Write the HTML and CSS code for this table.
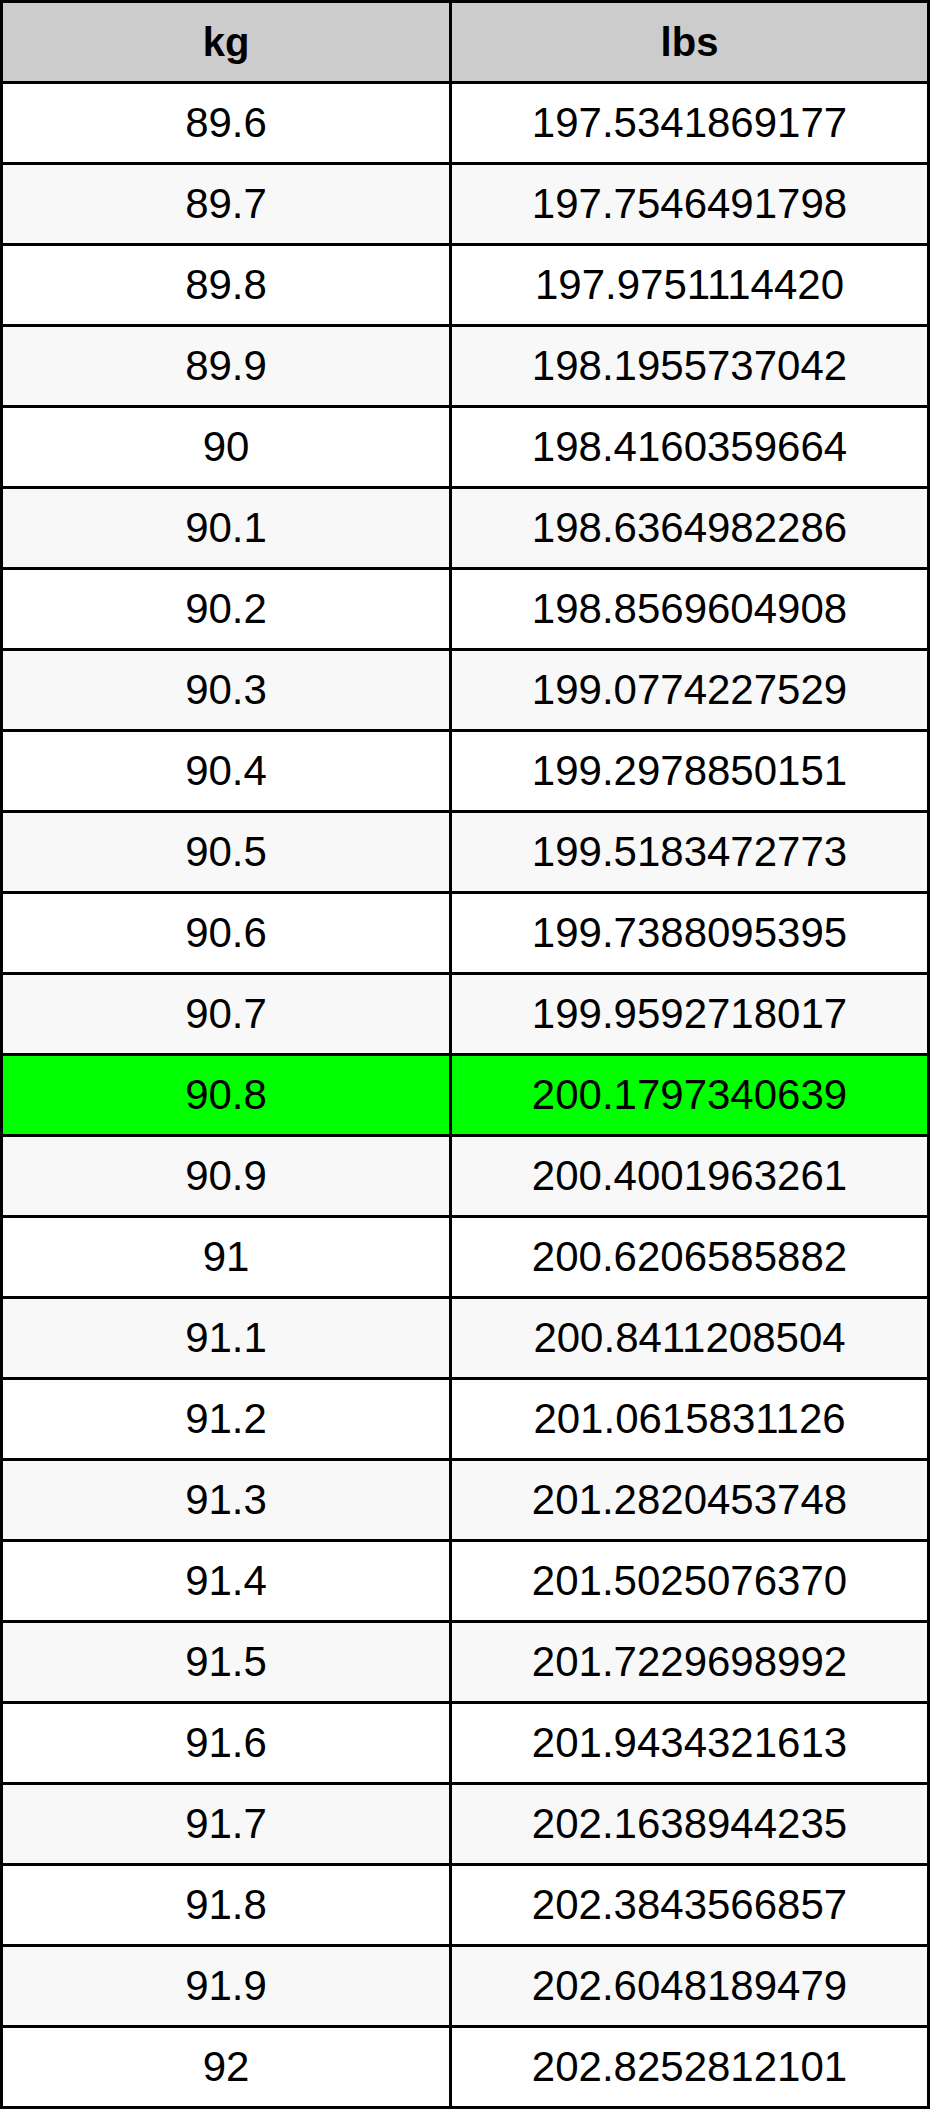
FILE: index.html
```html
<!DOCTYPE html>
<html>
<head>
<meta charset="utf-8">
<link rel="stylesheet" href="styles.css">
</head>
<body>
<table class="conv">
<thead>
<tr><th class="c1">kg</th><th class="c2">lbs</th></tr>
</thead>
<tbody>
<tr><td>89.6</td><td>197.5341869177</td></tr>
<tr><td>89.7</td><td>197.7546491798</td></tr>
<tr><td>89.8</td><td>197.9751114420</td></tr>
<tr><td>89.9</td><td>198.1955737042</td></tr>
<tr><td>90</td><td>198.4160359664</td></tr>
<tr><td>90.1</td><td>198.6364982286</td></tr>
<tr><td>90.2</td><td>198.8569604908</td></tr>
<tr><td>90.3</td><td>199.0774227529</td></tr>
<tr><td>90.4</td><td>199.2978850151</td></tr>
<tr><td>90.5</td><td>199.5183472773</td></tr>
<tr><td>90.6</td><td>199.7388095395</td></tr>
<tr><td>90.7</td><td>199.9592718017</td></tr>
<tr class="hl"><td>90.8</td><td>200.1797340639</td></tr>
<tr><td>90.9</td><td>200.4001963261</td></tr>
<tr><td>91</td><td>200.6206585882</td></tr>
<tr><td>91.1</td><td>200.8411208504</td></tr>
<tr><td>91.2</td><td>201.0615831126</td></tr>
<tr><td>91.3</td><td>201.2820453748</td></tr>
<tr><td>91.4</td><td>201.5025076370</td></tr>
<tr><td>91.5</td><td>201.7229698992</td></tr>
<tr><td>91.6</td><td>201.9434321613</td></tr>
<tr><td>91.7</td><td>202.1638944235</td></tr>
<tr><td>91.8</td><td>202.3843566857</td></tr>
<tr><td>91.9</td><td>202.6048189479</td></tr>
<tr><td>92</td><td>202.8252812101</td></tr>
</tbody>
</table>
</body>
</html>
```
FILE: styles.css
```css
html, body {
  margin: 0;
  padding: 0;
  background: #ffffff;
}
.conv {
  border-collapse: collapse;
  width: 930px;
  font-family: "Liberation Sans", Arial, sans-serif;
  font-size: 42px;
  color: #000;
}
.conv th, .conv td {
  border: 3px solid #000;
  height: 78px;
  padding: 0;
  text-align: center;
  vertical-align: middle;
  line-height: 1;
}
.conv th {
  background: #cccccc;
  font-weight: bold;
  font-size: 40px;
}
.conv .c1 {
  width: 446px;
}
.conv tbody tr:nth-child(even) td {
  background: #f8f8f8;
}
.conv tbody tr:nth-child(odd) td {
  background: #ffffff;
}
.conv tbody tr.hl td {
  background: #00ff00;
}
```
